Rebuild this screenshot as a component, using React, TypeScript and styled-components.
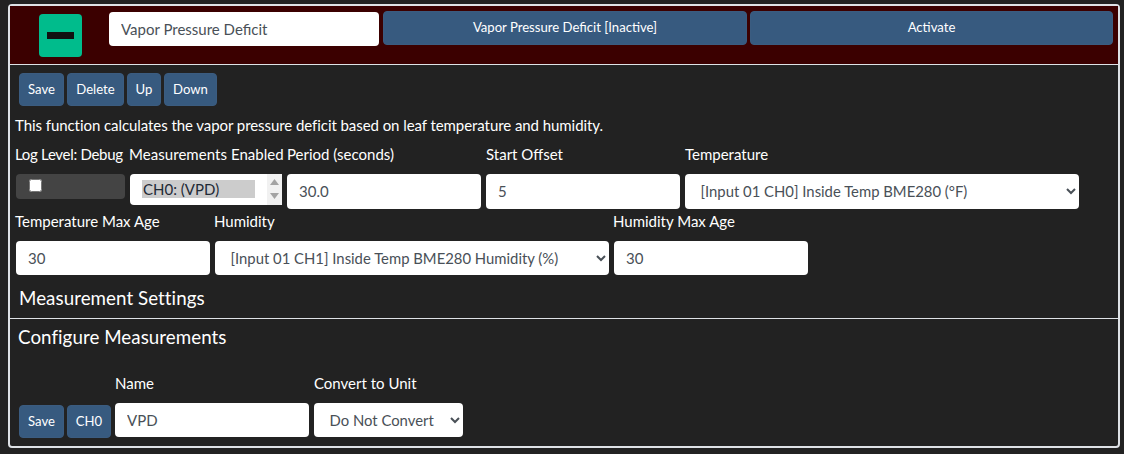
import React from "react";
import styled, { createGlobalStyle } from "styled-components";

const GlobalStyle = createGlobalStyle`
  html, body {
    margin: 0;
    padding: 0;
    background-color: #222;
    color: #fff;
    font-family: "Lato", sans-serif;
    font-size: 15px;
    line-height: 20px;
  }
`;

const Page = styled.div`
  width: 1124px;
  height: 454px;
  padding: 4px 4px 6px 8px;
  box-sizing: border-box;
  overflow: hidden;
`;

const Card = styled.div`
  height: 100%;
  box-sizing: border-box;
  border: 2px solid #dee2e6;
  border-radius: 4px;
`;

const Header = styled.div`
  height: 59px;
  box-sizing: border-box;
  background-color: #3b0000;
  border-bottom: 1px solid #dee2e6;
  display: flex;
  align-items: flex-start;
  padding: 5px 5px 0 29px;
`;

const StatusBox = styled.div`
  width: 43px;
  height: 43px;
  margin-top: 3px;
  margin-right: 27px;
  border-radius: 4px;
  background-color: #00bc8c;
  display: flex;
  align-items: center;
  justify-content: center;
`;

const StatusBar = styled.div`
  width: 27px;
  height: 7px;
  background-color: #111;
`;

const Button = styled.button<{ $w?: number; $h?: number }>`
  width: ${(p) => (p.$w ? `${p.$w}px` : "auto")};
  height: ${(p) => p.$h || 33}px;
  flex: none;
  padding: 0 0 2px;
  background-color: #375a7f;
  color: #fff;
  border: 1px solid #3b5c80;
  border-radius: 4px;
  font-family: "Lato", sans-serif;
  font-size: 13.125px;
  line-height: 20px;
`;

const Input = styled.input<{ $w: number; $h?: number }>`
  width: ${(p) => p.$w}px;
  height: ${(p) => p.$h || 35}px;
  flex: none;
  box-sizing: border-box;
  padding: 0 12px 1px;
  background-color: #fff;
  color: #495057;
  border: none;
  border-radius: 4px;
  font-family: "Lato", sans-serif;
  font-size: 15px;
`;

const Select = styled.select<{ $w: number; $h?: number }>`
  width: ${(p) => p.$w}px;
  height: ${(p) => p.$h || 35}px;
  flex: none;
  box-sizing: border-box;
  padding: 0 11.5px 1px;
  background-color: #fff;
  color: #495057;
  border: none;
  border-radius: 4px;
  font-family: "Lato", sans-serif;
  font-size: 14.85px;
`;

const Body = styled.div`
  padding: 8px 0 0 6px;
`;

const Toolbar = styled.div`
  display: flex;
  gap: 3px;
  padding-left: 3px;
`;

const Description = styled.p`
  margin: 9px 0 0 -1px;
  letter-spacing: -0.066px;
`;

const FieldRow = styled.div<{ $top: number }>`
  display: flex;
  align-items: flex-start;
  gap: 5px;
  margin-top: ${(p) => p.$top}px;
`;

const Field = styled.div<{ $w: number }>`
  width: ${(p) => p.$w}px;
  flex: none;
`;

const ConvertField = styled(Field)`
  margin-left: 5px;
`;

const Label = styled.div<{ $gap?: number; $left?: number; $ls?: number }>`
  height: 20px;
  margin-bottom: ${(p) => p.$gap ?? 10}px;
  margin-left: ${(p) => p.$left ?? -1}px;
  letter-spacing: ${(p) => p.$ls ?? 0}px;
  white-space: nowrap;
`;

const ToggleWrap = styled.div`
  width: 109px;
  height: 25px;
  box-sizing: border-box;
  padding-left: 13px;
  background-color: #444;
  border-radius: 4px;
  display: flex;
  align-items: center;
`;

const Check = styled.input`
  width: 13px;
  height: 13px;
  margin: 0 0 3px;
`;

const ListWrap = styled.div`
  display: flex;
  width: 152px;
  height: 31px;
`;

const ListBox = styled.select`
  display: block;
  width: 137px;
  height: 31px;
  box-sizing: border-box;
  padding: 6px 12px;
  background-color: #fff;
  border: none;
  border-radius: 4px 0 0 4px;
  font-family: "Lato", sans-serif;
  font-size: 15px;

  option {
    padding: 0 1px;
    background: #ccc;
    color: #1f2a36;
  }
`;

const ScrollRail = styled.div`
  width: 15px;
  background-color: #f1f1f1;
  display: flex;
  flex-direction: column;
  justify-content: space-between;
  align-items: center;
  padding: 5px 0 6px;
  box-sizing: border-box;
`;

const SectionTitle = styled.div`
  font-size: 18.75px;
  line-height: 24px;
  margin: 11px 0 0 3px;
  letter-spacing: 0.05px;
`;

const Divider = styled.div`
  height: 1px;
  background-color: #dee2e6;
  margin-top: 8px;
`;

const ConfigTitle = styled.div`
  font-size: 18.75px;
  line-height: 24px;
  margin: 6px 0 0 8px;
  letter-spacing: 0.05px;
`;

const ConfigRow = styled.div`
  display: flex;
  align-items: flex-end;
  margin: 24px 0 0 9px;
`;

const ConfigButtons = styled.div`
  display: flex;
  gap: 3px;
  width: 96px;
  margin-bottom: -1px;
`;

const HeaderInput = styled(Input)`
  margin-top: 1px;
  margin-right: 4px;
`;

const ActivateButton = styled(Button)`
  margin-left: 3px;
`;

const Arrow = ({ down }: { down?: boolean }) => (
  <svg width="9" height="6" viewBox="0 0 9 6">
    <path d={down ? "M0 0H9L4.5 6Z" : "M0 6H9L4.5 0Z"} fill="#a3a3a3" />
  </svg>
);

export default function App() {
  return (
    <>
      <GlobalStyle />
      <Page>
        <Card>
          <Header>
            <StatusBox>
              <StatusBar />
            </StatusBox>
            <HeaderInput $w={270} $h={34} defaultValue="Vapor Pressure Deficit" />
            <Button $w={364} $h={34}>Vapor Pressure Deficit [Inactive]</Button>
            <ActivateButton $w={363} $h={34}>Activate</ActivateButton>
          </Header>
          <Body>
            <Toolbar>
              <Button $w={45}>Save</Button>
              <Button $w={57}>Delete</Button>
              <Button $w={34}>Up</Button>
              <Button $w={53}>Down</Button>
            </Toolbar>
            <Description>This function calculates the vapor pressure deficit based on leaf temperature and humidity.</Description>
            <FieldRow $top={9}>
              <Field $w={109}>
                <Label $ls={-0.3}>Log Level: Debug</Label>
                <ToggleWrap>
                  <Check type="checkbox" />
                </ToggleWrap>
              </Field>
              <Field $w={152}>
                <Label $ls={0.05}>Measurements Enabled</Label>
                <ListWrap>
                  <ListBox multiple size={1} defaultValue={["0"]}>
                    <option value="0">CH0: (VPD)</option>
                  </ListBox>
                  <ScrollRail>
                    <Arrow />
                    <Arrow down />
                  </ScrollRail>
                </ListWrap>
              </Field>
              <Field $w={194}>
                <Label $left={0}>Period (seconds)</Label>
                <Input $w={194} defaultValue="30.0" />
              </Field>
              <Field $w={194}>
                <Label $left={0}>Start Offset</Label>
                <Input $w={194} defaultValue="5" />
              </Field>
              <Field $w={394}>
                <Label $left={0}>Temperature</Label>
                <Select $w={394}>
                  <option>[Input 01 CH0] Inside Temp BME280 (°F)</option>
                </Select>
              </Field>
            </FieldRow>
            <FieldRow $top={2}>
              <Field $w={194}>
                <Label>Temperature Max Age</Label>
                <Input $w={194} $h={34} defaultValue="30" />
              </Field>
              <Field $w={394}>
                <Label>Humidity</Label>
                <Select $w={394} $h={34}>
                  <option>[Input 01 CH1] Inside Temp BME280 Humidity (%)</option>
                </Select>
              </Field>
              <Field $w={194}>
                <Label>Humidity Max Age</Label>
                <Input $w={194} $h={34} defaultValue="30" />
              </Field>
            </FieldRow>
            <SectionTitle>Measurement Settings</SectionTitle>
          </Body>
          <Divider />
          <ConfigTitle>Configure Measurements</ConfigTitle>
          <ConfigRow>
            <ConfigButtons>
              <Button $w={45}>Save</Button>
              <Button $w={44}>CH0</Button>
            </ConfigButtons>
            <Field $w={194}>
              <Label $left={0}>Name</Label>
              <Input $w={194} $h={34} defaultValue="VPD" />
            </Field>
            <ConvertField $w={149}>
              <Label $left={0}>Convert to Unit</Label>
              <Select $w={149} $h={34}>
                <option>Do Not Convert</option>
              </Select>
            </ConvertField>
          </ConfigRow>
        </Card>
      </Page>
    </>
  );
}
